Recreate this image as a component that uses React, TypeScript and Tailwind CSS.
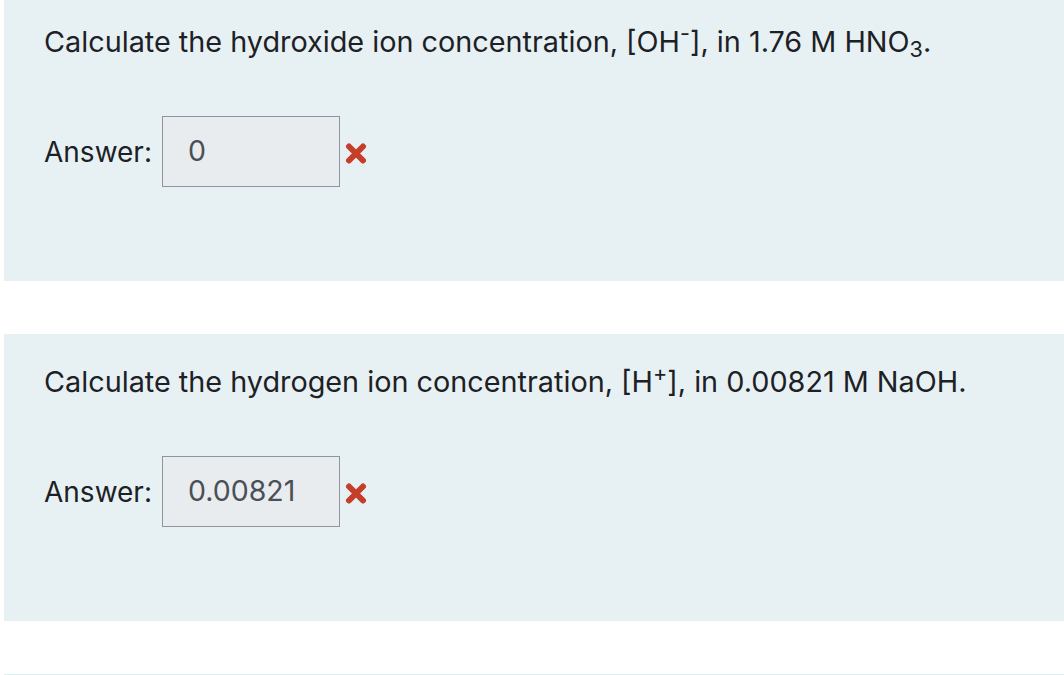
import React from "react";

function XIcon() {
  return (
    <svg width="22" height="21" viewBox="0 0 22 21" className="ml-[5px] mt-[4px] shrink-0">
      <path d="M4 3.5 L18 17.5 M18 3.5 L4 17.5" stroke="#c43e2a" strokeWidth="6" strokeLinecap="round" fill="none" />
    </svg>
  );
}

function Question({ children, value }: { children: React.ReactNode; value: string }) {
  return (
    <div className="bg-[#e7f1f4] ml-[4px] h-[287px] pl-[40px] pt-[30px]">
      <div className="text-[28.8px] leading-[36px] text-[#1d2125]">{children}</div>
      <div className="flex items-center mt-[56px]">
        <span className="text-[28px] text-[#1d2125] mr-[10px]">Answer:</span>
        <div className="w-[178px] h-[71px] border border-[#8f959e] bg-[#e9ecef] flex items-center pl-[25px] text-[28.5px] text-[#495057]">
          {value}
        </div>
        <XIcon />
      </div>
    </div>
  );
}

export default function App() {
  return (
    <div className="w-[1064px] h-[675px] overflow-hidden bg-white" style={{ fontFamily: "Inter, 'Noto Sans', sans-serif" }}>
      <div className="-mt-[6px]">
        <Question value="0">
          Calculate the hydroxide ion concentration, [OH<sup>-</sup>], in 1.76 M HNO<sub>3</sub>.
        </Question>
      </div>
      <div className="mt-[53px]">
        <Question value="0.00821">
          Calculate the hydrogen ion concentration, [H<sup>+</sup>], in 0.00821 M NaOH.
        </Question>
      </div>
      <div className="mt-[53px] ml-[4px] h-[20px] bg-[#e7f1f4] border-t border-[#dcefec]"></div>
    </div>
  );
}
